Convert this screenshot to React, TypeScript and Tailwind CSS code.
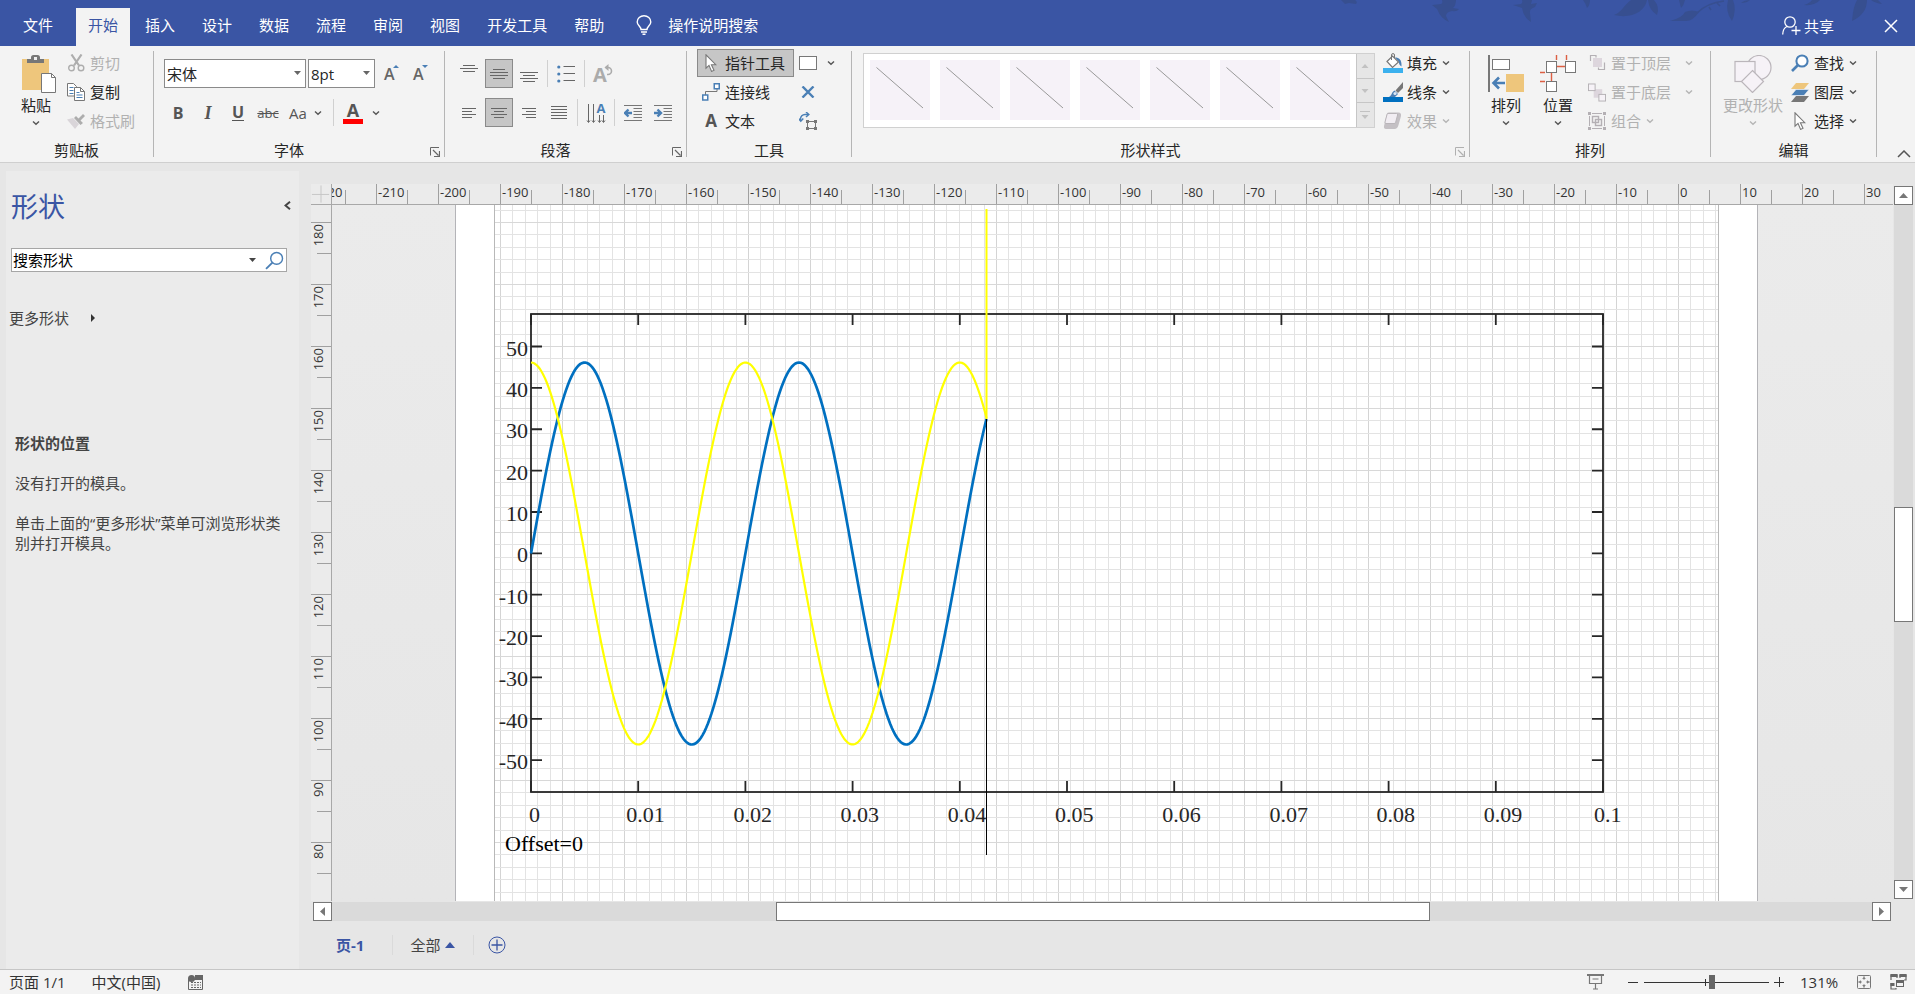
import React from "react";

type Kids = { children?: React.ReactNode };

const BLUE = "#4a7fb5";
const PALE = "#b4b0b4";

/* ---------- small shared pieces ---------- */

function Chevron({ dim = false }: { dim?: boolean }) {
  return (
    <svg className="h-2 w-3 shrink-0" viewBox="0 0 12 8" fill="none" stroke={dim ? "#b5b5b5" : "#555"} strokeWidth="1.4">
      <path d="M3 2.5 L6 5.3 L9 2.5" />
    </svg>
  );
}

function Launcher({ dim = false }: { dim?: boolean }) {
  return (
    <button aria-label="对话框启动器" className="absolute right-1 bottom-0 h-[10px] w-[10px]">
      <svg viewBox="0 0 10 10" className="h-full w-full" fill="none" stroke={dim ? "#b0b0b0" : "#666"}>
        <path d="M.5 8.5V.5H9" />
        <path d="M3 3L8.5 8.5M9.5 4v5.5H4" strokeWidth="1.2" />
      </svg>
    </button>
  );
}

function Group({ label, className = "", launcher, children }: Kids & { label: string; className?: string; launcher?: "on" | "dim" }) {
  return (
    <section className="relative flex h-[106px] flex-col border-r border-[#b5b5b5]">
      <div className={"flex h-[89px] " + className}>{children}</div>
      <h2 className={"h-[17px] text-center leading-[20px] whitespace-nowrap " + (launcher ? "pr-5" : "")}>{label}</h2>
      {launcher && <Launcher dim={launcher === "dim"} />}
    </section>
  );
}

function Sep({ wide = false }: { wide?: boolean }) {
  return <div className={"h-[27px] w-px shrink-0 bg-[#d0d0d0] " + (wide ? "mx-[9px]" : "mx-1")} />;
}

function Tool({ label, active = false, children }: Kids & { label: string; active?: boolean }) {
  return (
    <button
      aria-label={label}
      className={
        "flex h-[29px] w-7 shrink-0 items-center justify-center " +
        (active ? "border border-[#8a8a8a] bg-[#c6c6c6]" : "")
      }
    >
      {children}
    </button>
  );
}

function RowButton({ icon, text, dim = false, chevron = false, wide = false, far = false }: {
  icon: React.ReactNode; text: string; dim?: boolean; chevron?: boolean; wide?: boolean; far?: boolean;
}) {
  return (
    <button className={"flex h-6 items-center whitespace-nowrap leading-5 " + (dim ? "text-[#b1b1b1]" : "")}>
      <span className={"flex h-6 items-center justify-center " + (wide ? "w-5 mr-1" : "w-[18px] mr-[5px]")}>{icon}</span>
      {text}
      {chevron && <span className={far ? "ml-3" : "ml-[3px]"}><Chevron dim={dim} /></span>}
    </button>
  );
}

function BigButton({ icon, text, dim = false }: { icon: React.ReactNode; text: string; dim?: boolean }) {
  return (
    <button className={"mt-1 flex shrink-0 flex-col items-center self-start whitespace-nowrap " + (dim ? "w-[60px] text-[#b1b1b1]" : "w-11")}>
      {icon}
      <span className="mt-0.5 leading-5">{text}</span>
      <span className="mt-1 flex"><Chevron dim={dim} /></span>
    </button>
  );
}

/* ---------- icons ---------- */

function Lines({ rows, w = 18, h = 20 }: { rows: [number, number, number][]; w?: number; h?: number }) {
  return (
    <svg width={w} height={h} viewBox={`0 0 ${w} ${h}`}>
      {rows.map(([x, y, l]) => <rect key={y} x={x} y={y} width={l} height="1" fill="#666" />)}
    </svg>
  );
}

const PasteIcon = () => (
  <svg width="40" height="38" viewBox="-6 0 40 38">
    <rect y="4" width="27" height="31" fill="#eec67c" />
    <path d="M5 8V4h4V2.500Q9 0 11.500 0h4Q18 0 18 2.500V4h4v4z" fill="#777" />
    <rect x="12" y="2" width="3" height="3" fill="#eee" />
    <path d="M19.500 18.500h10l4 4v15h-14z" fill="#fff" stroke="#777" />
    <path d="M29.500 18.500v4h4" fill="none" stroke="#777" />
  </svg>
);
const CutIcon = () => (
  <svg width="17" height="18" viewBox="0 0 17 18" fill="none" stroke="#adadad">
    <path d="M3.500 .5L11 11.500M13.500 .5L6 11.500" strokeWidth="2.200" />
    <circle cx="3.500" cy="14" r="2.800" strokeWidth="1.400" />
    <circle cx="13" cy="14" r="2.800" strokeWidth="1.400" />
  </svg>
);
const CopyIcon = () => (
  <svg width="18" height="18" viewBox="0 0 18 18" stroke="#777" fill="#fff">
    <path d="M.5 .5h6l3 3v9.500h-9z" />
    <path d="M2.500 4.500h4M2.500 7.500h4M2.500 10.500h4" stroke={BLUE} />
    <path d="M7.500 4.500h6l4 4v9h-10z" />
    <path d="M13.500 4.500v4h4" fill="none" />
    <path d="M9.500 9.500h3M9.500 12h6M9.500 14.500h6" stroke={BLUE} />
  </svg>
);
const BrushIcon = () => (
  <svg width="18" height="15" viewBox="0 0 18 15">
    <path d="M0 5.500L6 4l6 6-4 5z" fill="#d9d5d9" />
    <path d="M7 4l2-2 2.500 2.500L16 0l2 2-4.500 4.500L16 9l-2.500 2z" fill="#adadad" />
  </svg>
);
function GrowA({ down = false }: { down?: boolean }) {
  return (
    <svg width="24" height="28" viewBox="0 0 24 28">
      <text x="5" y="20" fontSize="16" fontWeight="600" fontFamily="Open Sans" fill="#666">A</text>
      {down ? <path d="M14 5h6l-3 3z" fill={BLUE} /> : <path d="M14 8h6l-3-3z" fill={BLUE} />}
    </svg>
  );
}
const BulletsIcon = () => (
  <svg width="18" height="18" viewBox="0 0 18 18">
    {[2, 9, 16].map((y) => (
      <g key={y}><circle cx="1.800" cy={y} r="1.600" fill={BLUE} /><path d={`M6.500 ${y - 0.5}H18`} stroke="#666" /></g>
    ))}
  </svg>
);
const RotateTextIcon = () => (
  <svg width="24" height="28" viewBox="-2 -4 24 28">
    <text x="0" y="18" fontSize="20" fontWeight="700" fontFamily="Open Sans" fill="#ababab">A</text>
    <path d="M12.500 3.500H15a3.500 3.500 0 0 1 0 7h-1" fill="none" stroke="#ababab" strokeWidth="1.600" />
    <path d="M15.500 0L11.500 3.500l4 3.500z" fill="#ababab" />
  </svg>
);
const VerticalTextIcon = () => (
  <svg width="22" height="28" viewBox="-2 -5 22 28" fill="none" stroke="#666">
    <path d="M1.500 0v18M6.500 0v18M12.500 11v7M16.500 11v7" />
    <path d="M0 16.500l1.500 2 1.500-2M5 16.500l1.500 2 1.500-2M11 16.500l1.500 2 1.500-2M15 16.500l1.500 2 1.500-2" />
    <text x="9.500" y="9" fontSize="13" fontWeight="700" fontFamily="Open Sans" fill={BLUE} stroke="none">A</text>
  </svg>
);
function IndentIcon({ right = false }: { right?: boolean }) {
  return (
    <svg width="18" height="18" viewBox="0 0 18 18">
      <path d="M0 1.500h18M9.500 4.500H18M9.500 7.500H18M9.500 10.500H18M9.500 13.500H18M0 16.500h18" stroke="#777" />
      <path d={right ? "M0 9h7M3.500 5.500L7 9l-3.500 3.500" : "M1 9h7M4.500 5.500L1 9l3.500 3.500"} stroke={BLUE} strokeWidth="2.400" fill="none" />
    </svg>
  );
}
function PointerIcon({ stroke = "#777" }: { stroke?: string }) {
  return (
    <svg width="12" height="18" viewBox="0 0 12 18">
      <path d="M1 .8v13.400l3-2.800 2.600 6 2.400-1.100-2.600-5.600h4.400z" fill="#fff" stroke={stroke} strokeWidth="1.100" />
    </svg>
  );
}
const ConnectorIcon = () => (
  <svg width="18" height="18" viewBox="0 0 18 18" fill="#fff">
    <path d="M3.500 12V8.500H15V5" fill="none" stroke="#777" />
    <rect x=".75" y="12" width="5" height="5" stroke={BLUE} strokeWidth="1.500" />
    <rect x="12.250" y=".75" width="5" height="5" stroke={BLUE} strokeWidth="1.500" />
  </svg>
);
const TextIcon = () => <b className="text-[17px] leading-6 text-[#555]">A</b>;
const ConnPointIcon = () => (
  <svg width="18" height="18" viewBox="0 0 18 18" fill="none">
    <path d="M1.500 8.500V7a4.500 4.500 0 0 1 4.500-4.500h3" stroke={BLUE} strokeWidth="1.500" />
    <path d="M7 0l2.800 2.500L7 5M-.5 6.500L1.800 9.200 4.300 6.500" stroke={BLUE} strokeWidth="1.500" />
    <path d="M8.500 9.500h8v7h-8z" stroke="#777" />
    <path d="M7 8h3v3H7zM15 8h3v3h-3zM7 15h3v3H7zM15 15h3v3h-3z" fill="#777" />
  </svg>
);
const FillIcon = () => (
  <svg width="20" height="20" viewBox="0 0 20 20">
    <path d="M12 4.500c4 0 7 2 6.500 9-2-1-2.500-3-2.800-5z" fill={BLUE} />
    <path d="M4 8.500L9.500 3l6 6-6 5.500z" fill="#fff" stroke="#777" strokeWidth="1.200" />
    <path d="M8.500 7V2Q8.500 .6 10 .6T11.500 2v3" fill="none" stroke="#777" />
    <rect y="15" width="20" height="5" fill="#3bb1ee" />
  </svg>
);
const LineIcon = () => (
  <svg width="20" height="20" viewBox="0 0 20 20">
    <path d="M20 0v6l-5 5-2.500-2.500z" fill="#777" />
    <path d="M11.500 8.500L15 12l-3 3H6c3-1.500 2.500-5 5.500-6.500z" fill={BLUE} />
    <circle cx="12" cy="11.500" r="1.600" fill="#dce8f4" />
    <rect y="15" width="20" height="5" fill="#0070c0" />
  </svg>
);
const EffectIcon = () => (
  <svg width="19" height="18" viewBox="0 0 19 18">
    <path d="M4 1.500Q4.500 .5 6 .5h9.500Q18.500 .5 18 4l-2.500 9Q14.500 17 11.500 17H3Q.5 17 1 14z" fill="#c4c0c4" />
    <path d="M5 1.500h8.500Q15 1.500 14.600 3l-2 7.500Q12.300 11.500 11 11.500H3Q1.500 11.500 2 10L4 2.500Q4.200 1.500 5 1.500z" fill="#f1edf2" stroke="#b9b5b9" />
  </svg>
);
const AlignBigIcon = () => (
  <svg width="36" height="38" viewBox="0 0 36 38">
    <rect x="0" width="2" height="37" fill="#777" />
    <rect x="4.500" y="4.500" width="17" height="10" fill="#fff" stroke="#777" />
    <rect x="18" y="19" width="18" height="18" fill="#eec67c" />
    <path d="M5.500 28H17M11 22.500L5.500 28l5.500 5.500" fill="none" stroke={BLUE} strokeWidth="2.600" />
  </svg>
);
const PositionBigIcon = () => (
  <svg width="36" height="38" viewBox="0 0 36 38" fill="#fff">
    <path d="M16.500 0v5M26.500 0v5M17 11.500h8M0 17.500h5M11.500 18v8M0 26.500h5" stroke="#dd5f43" strokeWidth="1.400" />
    <rect x="6.500" y="6.500" width="10" height="11" stroke="#777" />
    <rect x="25.500" y="6.500" width="10" height="11" stroke="#777" />
    <rect x="6.500" y="26.500" width="10" height="10" stroke="#777" />
  </svg>
);
const FrontIcon = () => (
  <svg width="17" height="18" viewBox="0 0 17 18" fill="none" stroke={PALE} strokeWidth="1.200">
    <path d="M1.500 7V1.500H7v2M15.500 8.500v7H9.500v-2" />
    <rect x="4" y="4" width="9" height="9" fill="#ddd6dd" stroke="none" />
  </svg>
);
const BackIcon = () => (
  <svg width="19" height="19" viewBox="0 0 19 19" stroke={PALE} fill="#f6f2f7">
    <rect x="6" y="6" width="9" height="9" fill="#ddd6dd" stroke="none" />
    <rect x=".5" y=".5" width="7" height="7" />
    <rect x="11.500" y="11.500" width="7" height="7" />
  </svg>
);
const GroupIcon = () => (
  <svg width="18" height="18" viewBox="0 0 18 18" stroke={PALE} fill="none">
    <path d="M4 1.500h10M4 16.500h10M1.500 4v10M16.500 4v10" />
    <path d="M0 0h3v3H0zM15 0h3v3h-3zM0 15h3v3H0zM15 15h3v3h-3z" fill={PALE} stroke="none" />
    <rect x="4.500" y="4.500" width="6" height="6" strokeWidth="1.400" />
    <rect x="7.500" y="7.500" width="6" height="6" strokeWidth="1.400" />
  </svg>
);
const ChangeShapeIcon = () => (
  <svg width="38" height="38" viewBox="0 0 38 38" stroke="#bbb6bb" fill="#f6f2f7" strokeWidth="1.200">
    <circle cx="25" cy="12.500" r="12" />
    <rect x="1" y="6.500" width="20" height="20" />
    <path d="M18.500 15.500L29.500 26.500l-11 11-11-11z" />
  </svg>
);
const FindIcon = ({ size = 18, w = 2.4, fill = "#fff" }: { size?: number; w?: number; fill?: string }) => (
  <svg width={size} height={size} viewBox="0 0 18 18">
    <circle cx="11" cy="7" r="5.600" fill={fill} stroke={BLUE} strokeWidth={w * 0.85} />
    <path d="M7 11L1 17" stroke={BLUE} strokeWidth={w * 1.100} />
  </svg>
);
const LayerIcon = () => (
  <svg width="18" height="19" viewBox="0 0 18 19">
    <path d="M5 13h13l-5 6H0z" fill="#777" />
    <path d="M5 6.500h13l-5 6H0z" fill={BLUE} stroke="#f3f3f3" strokeWidth=".6" />
    <path d="M5 0h13l-5 6H0z" fill="#eec67c" />
  </svg>
);

/* ---------- title bar ---------- */

function TitleArt() {
  return (
    <svg className="absolute top-0 right-0 h-[46px] w-[600px]" viewBox="0 0 600 46" fill="#374f90">
      <path d="M26 0h14q3 2 1 4l-7-1-4 1z" />
      <path d="M117 5l9-1q2-1 1-4h14q0 5-3 8l6 1q-2 3-7 2-6 1-6 5l3 6q-8-3-12-13z" />
      <path d="M198 5l8-1q2-1 1-4h10l-1 4 6-1-2 4q-6 2-5 6l1 9q-8-5-9-14z" />
      <path d="M268 0h7q0 5-3 8-1-4-4-8z" />
      <path d="M299 15C307 12 308 6 316 0H332C330 12 316 19 299 15z" />
      <path d="M333 0h6q6 7 3 15-8-5-9-15z" />
      <path d="M364 0h6q-1 5-4 8-1-4-2-8z" />
      <path d="M355 21q12-3 15-9 7-3 14 0-6 9-13 9z" />
      <path d="M382 13q10-10 27-12M394 7l2 3M402 3l3 3" stroke="#374f90" fill="none" strokeWidth="1.500" />
      <path d="M413 0h5q4 10-1 21-7-9-4-21z" />
      <path d="M426 3q3-3 9-3-3 3-9 3z" />
      <path d="M489 5q6-2 8-5h8q-5 6-16 5z" />
      <path d="M537 21q1-14 5-21h10q0 14-15 21z" />
      <path d="M556 0h7l4 4q-7-1-11-4z" />
    </svg>
  );
}

const TABS = ["插入", "设计", "数据", "流程", "审阅", "视图", "开发工具", "帮助"];

function TitleBar() {
  return (
    <header className="relative flex h-[46px] shrink-0 items-end bg-[#3a55a4] text-white">
      <TitleArt />
      <nav className="relative flex h-[38px] gap-[3px] pl-[11px]">
        <button className="mr-2 px-3 pb-[5px]">文件</button>
        <button className="bg-[#f3f3f3] px-3 pb-[5px] text-[#3a55a4]">开始</button>
        {TABS.map((t) => <button key={t} className="px-3 pb-[5px]">{t}</button>)}
      </nav>
      <button className="relative ml-5 flex h-[38px] items-center gap-4 pb-1">
        <svg width="16" height="20" viewBox="0 0 16 20" fill="none" stroke="#fff" strokeWidth="1.400">
          <path d="M5 14.500C5 11.500 1.200 10.500 1.200 7a6.800 6.300 0 0 1 13.600 0C14.800 10.500 11 11.500 11 14.500zM5 17h6M6.500 19.300h3" />
        </svg>
        操作说明搜索
      </button>
      <div className="relative ml-auto flex h-[38px] items-center gap-[50px] pr-[17px] pb-[3px]">
        <button className="flex items-center gap-[3px]">
          <svg width="19" height="20" viewBox="0 0 19 20" fill="none" stroke="#fff" strokeWidth="1.300">
            <circle cx="8" cy="6" r="5.200" />
            <path d="M.7 18.500Q1 12 5 10.500M14 10v9M9.500 14.500h9" />
          </svg>
          共享
        </button>
        <button aria-label="关闭">
          <svg width="14" height="14" viewBox="0 0 14 14" stroke="#fff" strokeWidth="1.500"><path d="M1 1l12 12M13 1L1 13" /></svg>
        </button>
      </div>
    </header>
  );
}

/* ---------- ribbon ---------- */

function Combo({ label, value, wide = false }: { label: string; value: string; wide?: boolean }) {
  return (
    <div className={"relative h-[29px] " + (wide ? "w-[142px]" : "w-[67px]")}>
      <select aria-label={label} className="h-full w-full appearance-none border border-[#8a8a8a] bg-white pl-[2px]">
        <option>{value}</option>
      </select>
      <svg className="pointer-events-none absolute top-3 right-[5px]" width="7" height="4" viewBox="0 0 7 4"><path d="M0 0h7L3.500 4z" fill="#666" /></svg>
    </div>
  );
}

function ScrollGlyph({ kind }: { kind: "up" | "down" | "more" }) {
  return (
    <button aria-label={kind} className="flex flex-1 items-center justify-center border-b border-[#c6c6c6] last:border-b-0">
      <svg width="10" height="8" viewBox="0 0 10 8" fill="#c2c2c2">
        {kind === "up" && <path d="M1.500 6h7L5 2z" />}
        {kind === "down" && <path d="M1.500 2h7L5 6z" />}
        {kind === "more" && <path d="M0 0h10v1H0zM1.500 4h7L5 8z" />}
      </svg>
    </button>
  );
}

function Ribbon() {
  return (
    <div className="flex h-[117px] shrink-0 border-b border-[#cfcfcf] bg-[#f3f3f3] pt-[5px] text-[#262626]">
      <Group label="剪贴板" className="w-[153px] pr-4 pl-[14px]">
        <BigButton icon={<PasteIcon />} text="粘贴" />
        <div className="ml-[9px] flex flex-col gap-[5px]">
          <RowButton icon={<CutIcon />} text="剪切" dim />
          <RowButton icon={<CopyIcon />} text="复制" />
          <RowButton icon={<BrushIcon />} text="格式刷" dim />
        </div>
      </Group>

      <Group label="字体" className="w-[290px] flex-col gap-[10px] pt-2 pl-[10px]" launcher="on">
        <div className="flex gap-0.5">
          <Combo label="字体" value="宋体" wide />
          <Combo label="字号" value="8pt" />
          <div className="flex gap-px">
            <Tool label="增大字号"><GrowA /></Tool>
            <Tool label="减小字号"><GrowA down /></Tool>
          </div>
        </div>
        <div className="flex items-center text-[#555]">
          <div className="flex gap-0.5">
            <Tool label="加粗"><b className="text-[16px]">B</b></Tool>
            <Tool label="倾斜"><b className="font-['Liberation_Serif',serif] text-[18px] italic">I</b></Tool>
            <Tool label="下划线"><b className="border-b border-[#555] text-[16px] leading-4">U</b></Tool>
            <Tool label="删除线"><span className="text-[13px] line-through">abc</span></Tool>
            <Tool label="更改大小写"><span className="text-[15px]">Aa</span></Tool>
          </div>
          <Chevron />
          <Sep wide />
          <button aria-label="字体颜色" className="flex h-[22px] w-5 flex-col items-center">
            <b className="text-[18px] leading-[17px]">A</b>
            <span className="h-[5px] w-5 shrink-0 bg-[#ff0000]" />
          </button>
          <span className="ml-[7px] flex"><Chevron /></span>
        </div>
      </Group>

      <Group label="段落" className="w-[241px] flex-col gap-[10px] pt-2 pl-[10px]" launcher="on">
        <div className="flex items-center">
          <div className="flex gap-0.5">
            <Tool label="顶端对齐"><Lines rows={[[3, 0, 12], [0, 3, 18], [3, 6, 12]]} h={18} /></Tool>
            <Tool label="中部对齐" active><Lines rows={[[3, 5, 12], [0, 8, 18], [0, 11, 18], [3, 14, 12]]} /></Tool>
            <Tool label="底端对齐"><Lines rows={[[0, 8, 18], [3, 11, 12], [0, 14, 18], [3, 17, 12]]} h={20} /></Tool>
          </div>
          <Sep />
          <Tool label="项目符号"><BulletsIcon /></Tool>
          <Sep />
          <Tool label="旋转文本"><RotateTextIcon /></Tool>
        </div>
        <div className="flex items-center">
          <div className="flex gap-0.5">
            <Tool label="左对齐"><Lines rows={[[0, 5, 14], [0, 8, 10], [0, 11, 14], [0, 14, 10]]} w={14} /></Tool>
            <Tool label="居中" active><Lines rows={[[0, 5, 16], [3, 8, 10], [0, 11, 16], [3, 14, 10]]} w={16} /></Tool>
            <Tool label="右对齐"><Lines rows={[[0, 5, 14], [4, 8, 10], [0, 11, 14], [4, 14, 10]]} w={14} /></Tool>
            <Tool label="两端对齐"><Lines rows={[[0, 3, 16], [0, 6, 16], [0, 9, 16], [0, 12, 16], [0, 15, 16]]} w={16} /></Tool>
          </div>
          <Sep />
          <Tool label="文字方向"><VerticalTextIcon /></Tool>
          <Sep />
          <div className="flex gap-0.5">
            <Tool label="减少缩进"><IndentIcon /></Tool>
            <Tool label="增加缩进"><IndentIcon right /></Tool>
          </div>
        </div>
      </Group>

      <Group label="工具" className="w-[164px] gap-[5px] pl-[10px]">
        <div className="flex w-[97px] flex-col gap-[5px]">
          <div className="flex h-6 items-center">
            <div className="flex h-[28px] w-full shrink-0 items-center border border-[#8a8a8a] bg-[#c6c6c6] pl-1">
              <RowButton icon={<PointerIcon />} text="指针工具" />
            </div>
          </div>
          <div className="pl-[5px]"><RowButton icon={<ConnectorIcon />} text="连接线" /></div>
          <div className="pl-[5px]"><RowButton icon={<TextIcon />} text="文本" /></div>
        </div>
        <div className="flex flex-col gap-[5px]">
          <button aria-label="矩形" className="flex h-6 items-center gap-2">
            <span className="h-[14px] w-[18px] border border-[#777] bg-white" />
            <Chevron />
          </button>
          <button aria-label="连接点" className="flex h-6 w-[18px] items-center justify-center">
            <svg width="14" height="12" viewBox="0 0 14 12" stroke={BLUE} strokeWidth="2.400"><path d="M1.500 .5l11 11M12.500 .5l-11 11" /></svg>
          </button>
          <button aria-label="文本块" className="flex h-6 w-[18px] items-center justify-center"><ConnPointIcon /></button>
        </div>
      </Group>

      <div className="min-w-0 flex-1">
        <section className="relative flex h-[106px] flex-col border-r border-[#b5b5b5]">
          <div className="flex h-[89px] pr-[17px] pl-[11px]">
            <div className="mt-0.5 flex h-[75px] min-w-0 flex-1 border border-[#d0d0d0] bg-white">
              <div className="flex min-w-0 flex-1 gap-[10px] overflow-hidden pt-[6px] pl-[6px]">
                {[0, 1, 2, 3, 4, 5, 6].map((i) => (
                  <button key={i} aria-label={`样式 ${i + 1}`} className="h-[60px] w-[60px] shrink-0 bg-[#f6f2f8]">
                    <svg width="60" height="60" viewBox="0 0 60 60"><path d="M6.500 7.500L53 48" stroke="#999" /></svg>
                  </button>
                ))}
              </div>
              <div className="flex w-[18px] flex-col border-l border-[#c6c6c6] bg-[#e6e6e6]">
                <ScrollGlyph kind="up" />
                <ScrollGlyph kind="down" />
                <ScrollGlyph kind="more" />
              </div>
            </div>
            <div className="ml-2 flex flex-col gap-[5px]">
              <RowButton wide icon={<FillIcon />} text="填充" chevron />
              <RowButton wide icon={<LineIcon />} text="线条" chevron />
              <RowButton wide icon={<EffectIcon />} text="效果" chevron dim />
            </div>
          </div>
          <h2 className="h-[17px] pr-5 text-center leading-[20px]">形状样式</h2>
          <Launcher dim />
        </section>
      </div>

      <Group label="排列" className="w-[240px] pl-[14px]">
        <div className="flex gap-2">
          <BigButton icon={<AlignBigIcon />} text="排列" />
          <BigButton icon={<PositionBigIcon />} text="位置" />
        </div>
        <div className="ml-2 flex flex-col gap-[5px]">
          <RowButton icon={<FrontIcon />} text="置于顶层" dim chevron far />
          <RowButton icon={<BackIcon />} text="置于底层" dim chevron far />
          <RowButton icon={<GroupIcon />} text="组合" dim chevron />
        </div>
      </Group>

      <Group label="编辑" className="w-[165px] pl-3">
        <BigButton icon={<ChangeShapeIcon />} text="更改形状" dim />
        <div className="ml-2 flex flex-col gap-[5px]">
          <RowButton icon={<FindIcon />} text="查找" chevron />
          <RowButton icon={<LayerIcon />} text="图层" chevron />
          <RowButton icon={<PointerIcon />} text="选择" chevron />
        </div>
      </Group>

      <div className="flex w-[38px] shrink-0 items-end justify-end pr-1">
        <button aria-label="折叠功能区" className="pb-1">
          <svg width="14" height="8" viewBox="0 0 14 8" fill="none" stroke="#555" strokeWidth="1.500"><path d="M1 7l6-6 6 6" /></svg>
        </button>
      </div>
    </div>
  );
}

/* ---------- shapes pane ---------- */

function ShapesPane() {
  return (
    <aside className="mt-2 ml-[6px] flex w-[293px] shrink-0 flex-col bg-[#ebebeb] text-[#444]">
      <div className="flex items-center justify-between pt-4 pr-2 pl-[5px]">
        <h1 className="text-[27px] leading-10 text-[#3a55a4]">形状</h1>
        <button aria-label="最小化形状窗口" className="pb-1">
          <svg width="7" height="9" viewBox="0 0 7 9" fill="none" stroke="#444" strokeWidth="2"><path d="M6 .8L1.500 4.500 6 8.200" /></svg>
        </button>
      </div>
      <div className="mt-[21px] mr-3 ml-[5px] flex h-6 items-center border border-[#a6a6a6] bg-white pr-0.5">
        <input aria-label="搜索形状" defaultValue="搜索形状" className="h-full min-w-0 flex-1 pb-px pl-px text-black outline-none" />
        <button aria-label="展开搜索" className="mr-[9px]">
          <svg width="7" height="4" viewBox="0 0 7 4"><path d="M0 0h7L3.500 4z" fill="#444" /></svg>
        </button>
        <button aria-label="搜索"><FindIcon w={1.6} size={19} /></button>
      </div>
      <button className="mt-9 ml-[3px] flex items-center gap-[22px] leading-5">
        更多形状
        <svg width="4" height="8" viewBox="0 0 4 8"><path d="M0 0l4 4-4 4z" fill="#333" /></svg>
      </button>
      <div className="mt-[105px] flex flex-col gap-5 px-[9px] leading-5">
        <h3 className="font-bold">形状的位置</h3>
        <p>没有打开的模具。</p>
        <p>单击上面的“更多形状”菜单可浏览形状类别并打开模具。</p>
      </div>
    </aside>
  );
}

/* ---------- rulers ---------- */

const STEP = 62;

function TopRuler() {
  const marks = Array.from({ length: 27 }, (_, i) => ({ v: -220 + i * 10, x: -17 + i * STEP }));
  return (
    <div className="flex h-[21px] shrink-0 border-b border-[#a8a8a8] bg-[#ebebeb]">
      <svg className="h-5 w-[21px] shrink-0 border-r border-[#a8a8a8]" viewBox="0 0 21 20" stroke="#c6c6c6"><path d="M10.500 1v18M1 10.500h18" /></svg>
      <svg className="h-5 min-w-0 flex-1" fontFamily="'Open Sans', sans-serif" fontSize="13" fill="#333">
        {marks.map(({ v, x }) => (
          <g key={v}>
            <path d={`M${x - 0.5} 0v20M${x + 30.5} 6v14`} stroke="#a0a0a0" />
            <text x={x + 1} y="13">{v}</text>
          </g>
        ))}
      </svg>
    </div>
  );
}

function SideRuler() {
  const marks = Array.from({ length: 12 }, (_, i) => ({ v: 180 - i * 10, y: 17 + i * STEP }));
  return (
    <svg className="h-full w-[21px] shrink-0 border-r border-[#a8a8a8] bg-[#ebebeb]" fontFamily="'Open Sans', sans-serif" fontSize="13" fill="#333">
      {marks.map(({ v, y }) => (
        <g key={v}>
          <path d={`M0 ${y + 0.5}h20M6 ${y + 31.5}h14`} stroke="#a0a0a0" />
          <text transform={`translate(12 ${y + 2}) rotate(-90)`} textAnchor="end">{v}</text>
        </g>
      ))}
    </svg>
  );
}

/* ---------- drawing canvas ---------- */

const PAGE = { left: 123, right: 1425, innerLeft: 162, innerRight: 1386 };
const AXIS = { left: 199, right: 1271, top: 109, bottom: 587, zeroY: 348.5, amp: 191, period: 214.4 };
const CURSOR_X = 654.5;

function wave(phase: number) {
  const pts: string[] = [];
  const steps = 260;
  for (let i = 0; i <= steps; i++) {
    const x = AXIS.left + ((CURSOR_X - AXIS.left) * i) / steps;
    const y = AXIS.zeroY - AXIS.amp * Math.sin(((x - AXIS.left) / AXIS.period) * 2 * Math.PI + phase);
    pts.push(`${x.toFixed(2)} ${y.toFixed(2)}`);
  }
  return "M" + pts.join("L");
}

function Canvas() {
  const vLines = Array.from({ length: 99 }, (_, i) => ({ major: i % 5 === 0, x: Math.round(168 + i * 12.4) })).filter((l) => l.x < PAGE.innerRight);
  const hLines = Array.from({ length: 100 }, (_, i) => ({ major: i % 5 === 0, y: Math.round(-45 + i * 12.4) }));
  const xTicks = Array.from({ length: 11 }, (_, i) => AXIS.left + i * 107.2);
  const yTicks = Array.from({ length: 11 }, (_, i) => ({ v: 50 - i * 10, y: 141.500 + i * 41.37 }));
  return (
    <svg className="h-full min-w-0 flex-1 bg-linear-to-b from-[#ebebeb] to-[#e6e6e6]">
      <rect x={PAGE.left} y="-2" width={PAGE.right - PAGE.left} height="2000" fill="#fff" />
      <path d={`M${PAGE.left + 0.5} 0v2000M${PAGE.right + 0.5} 0v2000`} stroke="#b4b4b8" />
      {vLines.map((l) => <rect key={l.x} x={l.x} width="1" height="2000" fill={l.major ? "#d4d4d4" : "#e3e3e3"} />)}
      {hLines.map((l) => <rect key={l.y} x={PAGE.innerLeft} y={l.y} width={PAGE.innerRight - PAGE.innerLeft} height="1" fill={l.major ? "#d8d8d8" : "#e3e3e3"} />)}
      <path d={`M${PAGE.innerLeft + 0.5} 0v2000M${PAGE.innerRight + 0.5} 0v2000`} stroke="#b8b8b8" />

      <g stroke="#262626" strokeWidth="1.800" fill="none">
        <rect x={AXIS.left} y={AXIS.top} width={AXIS.right - AXIS.left} height={AXIS.bottom - AXIS.top} />
        {xTicks.map((x) => <path key={x} d={`M${x} ${AXIS.top}v11M${x} ${AXIS.bottom}v-11`} />)}
        {yTicks.map(({ v, y }) => <path key={v} d={`M${AXIS.left} ${y}h11M${AXIS.right} ${y}h-11`} />)}
      </g>

      <path d={wave(0)} fill="none" stroke="#0070c0" strokeWidth="2.700" />
      <path d={wave(Math.PI / 2)} fill="none" stroke="#ffff00" strokeWidth="2.200" />
      <path d={`M${CURSOR_X} 4V214`} stroke="#ffff00" strokeWidth="2" />
      <path d={`M${CURSOR_X} 214V650`} stroke="#000" />

      <g fontFamily="'Liberation Serif', serif" fontSize="22" fill="#262626">
        {yTicks.map(({ v, y }) => <text key={v} x={AXIS.left - 3} y={y + 9} textAnchor="end">{v}</text>)}
        {xTicks.map((x, i) => (
          <text key={x} x={i === 0 ? x - 2 : i === 10 ? x - 9 : x - 12} y="617">{i === 0 ? "0" : i === 10 ? "0.1" : `0.0${i}`}</text>
        ))}
        <text x="173" y="646" fill="#000">Offset=0</text>
      </g>
    </svg>
  );
}

/* ---------- scroll bars ---------- */

const ARROWS = { up: "M1 8h9L5.500 3z", down: "M1 3h9L5.500 8z", left: "M8 1v9L3 5.500z", right: "M3 1v9l5-4.500z" };

function ScrollButton({ dir, label }: { dir: keyof typeof ARROWS; label: string }) {
  return (
    <button aria-label={label} className="flex h-[19px] w-[19px] shrink-0 items-center justify-center border border-[#777] bg-white">
      <svg width="11" height="11" viewBox="0 0 11 11" fill="#777"><path d={ARROWS[dir]} /></svg>
    </button>
  );
}

function Workspace() {
  return (
    <main className="ml-3 flex min-w-0 flex-1 gap-px pt-[21px] pr-0.5">
      <div className="flex min-w-0 flex-1 flex-col">
        <TopRuler />
        <div className="flex min-h-0 flex-1 overflow-hidden">
          <SideRuler />
          <Canvas />
        </div>
        <div className="mx-0.5 mt-px flex h-[19px] shrink-0 bg-[#dadada]">
          <ScrollButton dir="left" label="向左滚动" />
          <div className="flex-[445]" />
          <div className="flex-[652] border border-[#777] bg-white" />
          <div className="flex-[443]" />
          <ScrollButton dir="right" label="向右滚动" />
        </div>
        <div className="flex h-12 shrink-0 items-center pl-[25px]">
          <button className="font-bold text-[#3a55a4]">页-1</button>
          <div className="ml-7 h-5 w-px bg-[#dadada]" />
          <button className="ml-[17px] flex items-center gap-[5px] text-[#444]">
            全部
            <svg width="10" height="6" viewBox="0 0 10 6"><path d="M0 6h10L5 0z" fill="#3a55a4" /></svg>
          </button>
          <div className="ml-[18px] h-5 w-px bg-[#dadada]" />
          <button aria-label="插入页" className="ml-[14px]">
            <svg width="18" height="18" viewBox="0 0 18 18" fill="none" stroke="#3a55a4"><circle cx="9" cy="9" r="8" /><path d="M9 3.500v11M3.500 9h11" strokeWidth="1.300" /></svg>
          </button>
        </div>
      </div>
      <div className="mt-0.5 mb-[70px] flex w-[19px] shrink-0 flex-col bg-[#dadada]">
        <ScrollButton dir="up" label="向上滚动" />
        <div className="flex-[302]" />
        <div className="flex-[114] border border-[#777] bg-white" />
        <div className="flex-[258]" />
        <ScrollButton dir="down" label="向下滚动" />
      </div>
    </main>
  );
}

/* ---------- status bar ---------- */

function StatusBar() {
  return (
    <footer className="flex h-[25px] shrink-0 items-center border-t border-[#c6c6c6] bg-[#f3f3f3] pr-2 pl-[9px] text-[#333]">
      <span>页面 1/1</span>
      <span className="ml-[26px]">中文(中国)</span>
      <button aria-label="宏录制" className="ml-7">
        <svg width="15" height="15" viewBox="0 0 15 15">
          <path d="M.5 4.500h14v10H.5z" fill="#f3f3f3" stroke="#666" />
          <path d="M7 0h8v5H7z" fill="#666" />
          <circle cx="3.500" cy="3.500" r="3.500" fill="#666" />
          <path d="M3 7.500h10M3 10h10M3 12.500h10" stroke="#666" strokeDasharray="2 1" />
        </svg>
      </button>
      <div className="ml-auto flex items-center">
        <button aria-label="演示模式">
          <svg width="17" height="16" viewBox="0 0 17 16" fill="none" stroke="#777" strokeWidth="1.200">
            <path d="M0 1h17" strokeWidth="2" /><path d="M2.500 1.500v8h12v-8M5.500 5h6M8.500 9.500V15M6 15h5" />
          </svg>
        </button>
        <button aria-label="缩小" className="ml-6 h-px w-[10px] bg-[#333]" />
        <div className="relative ml-[6px] flex h-5 w-[125px] items-center">
          <div className="absolute left-[61px] h-[7px] w-px bg-[#333]" />
          <input
            type="range" min="0" max="100" defaultValue="55" aria-label="缩放"
            className="h-5 w-full appearance-none bg-transparent [&::-webkit-slider-runnable-track]:h-px [&::-webkit-slider-runnable-track]:appearance-none [&::-webkit-slider-runnable-track]:bg-[#333] [&::-webkit-slider-thumb]:-mt-[7px] [&::-webkit-slider-thumb]:h-[14px] [&::-webkit-slider-thumb]:w-[6px] [&::-webkit-slider-thumb]:appearance-none [&::-webkit-slider-thumb]:bg-[#666]"
          />
        </div>
        <button aria-label="放大" className="ml-[5px]">
          <svg width="10" height="10" viewBox="0 0 10 10" stroke="#333"><path d="M0 5.500h10M5.500 0v10" /></svg>
        </button>
        <button className="ml-4 w-[42px] text-left">131%</button>
        <button aria-label="适应窗口" className="ml-[15px]">
          <svg width="14" height="14" viewBox="0 0 14 14" fill="none" stroke="#777">
            <rect x=".5" y=".5" width="13" height="13" rx="1" />
            <path d="M7 1.500v3M7 9.500v3M1.500 7h3M9.500 7h3" strokeWidth="1.400" />
            <path d="M5.500 3.500h3M5.500 10.500h3M3.500 5.500v3M10.500 5.500v3" strokeWidth=".8" />
          </svg>
        </button>
        <button aria-label="切换窗口" className="ml-[19px]">
          <svg width="17" height="16" viewBox="0 0 17 16" fill="none" stroke="#666">
            <path d="M1 6V1h6v3M10 4V1h6v5h-2M1 9v6h5v-1" strokeWidth="1.200" />
            <path d="M.5 0h7v3h-7zM9.500 0h7v3h-7zM.5 9h4v3h-4z" fill="#666" stroke="none" />
            <rect x="6.500" y="6.500" width="7" height="6" /><path d="M6 6h8v3H6z" fill="#666" stroke="none" />
          </svg>
        </button>
      </div>
    </footer>
  );
}

export default function App() {
  return (
    <div className="flex h-screen flex-col overflow-hidden bg-[#e6e6e6] font-['Open_Sans','Noto_Sans_CJK_SC',sans-serif] text-[15px] leading-5">
      <TitleBar />
      <Ribbon />
      <div className="flex min-h-0 flex-1">
        <ShapesPane />
        <Workspace />
      </div>
      <StatusBar />
    </div>
  );
}
